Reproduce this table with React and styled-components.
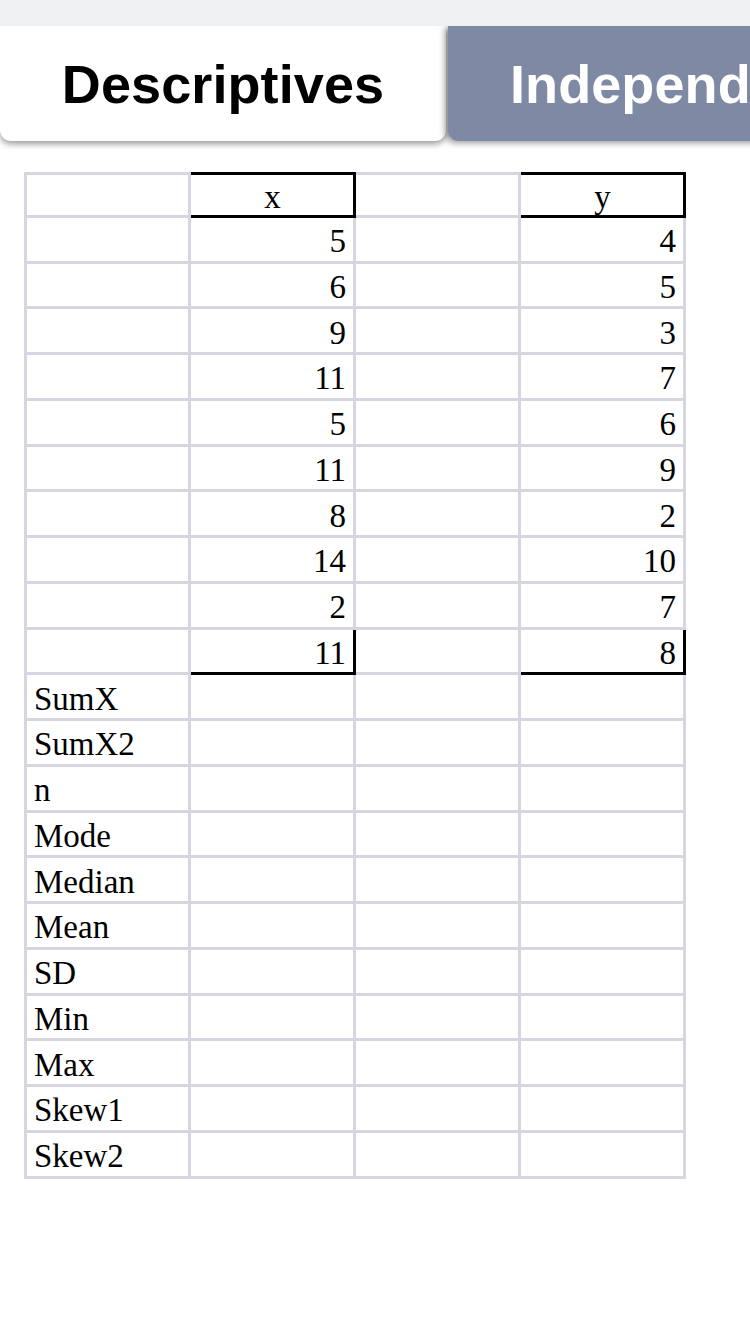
import React from "react";
import styled, { createGlobalStyle } from "styled-components";

const Global = createGlobalStyle`
  html, body { margin: 0; padding: 0; background: #ffffff; }
  body { width: 750px; overflow: hidden; }
`;

const Page = styled.div`
  width: 750px;
  min-height: 1334px;
  background: #ffffff;
`;

const TopStrip = styled.div`
  height: 26px;
  background: #eff0f2;
`;

const TabBar = styled.nav`
  display: flex;
  gap: 2px;
  overflow: hidden;
  padding-bottom: 8px;
`;

const Tab = styled.div`
  flex: 0 0 446px;
  height: 115px;
  display: flex;
  align-items: center;
  justify-content: center;
  white-space: nowrap;
  border-radius: 0 0 11px 11px;
  background: ${(p) => (p.$active ? "#ffffff" : "#7e89a4")};
  color: ${(p) => (p.$active ? "#000000" : "#ffffff")};
  box-shadow: ${(p) =>
    p.$active
      ? "0 3px 6px rgba(0,0,0,0.4)"
      : "-3px 2px 6px rgba(0,0,0,0.4)"};
  font-family: "Liberation Sans", Arial, sans-serif;
  font-weight: 700;
  font-size: 54px;
  letter-spacing: 0.1px;
`;

const Sheet = styled.div`
  margin: 23px 0 0 24px;
  width: 662px;
  display: grid;
  grid-template-columns: 167px 165px 165px 165px;
  grid-auto-rows: 45.75px;
  font-family: "Liberation Serif", "Times New Roman", serif;
  font-size: 33px;
  color: #000;
`;

const GRAY = "#d6d5e0";
const BLACK = "#000000";

const Cell = styled.div`
  box-sizing: border-box;
  display: flex;
  align-items: center;
  justify-content: ${(p) =>
    p.$align === "right" ? "flex-end" : p.$align === "center" ? "center" : "flex-start"};
  padding: 5px ${(p) => (p.$align === "right" ? "7px" : "6px")} 0 7px;
  white-space: nowrap;
  line-height: 1;
  border-right: 3px solid ${(p) => (p.$boxRight ? BLACK : GRAY)};
  border-bottom: 3px solid ${(p) => (p.$boxBottom ? BLACK : GRAY)};
  border-top: ${(p) =>
    p.$first ? `3px solid ${p.$boxTop ? BLACK : GRAY}` : "none"};
  border-left: ${(p) => (p.$leftEdge ? `3px solid ${GRAY}` : "none")};
`;

const xs = [5, 6, 9, 11, 5, 11, 8, 14, 2, 11];
const ys = [4, 5, 3, 7, 6, 9, 2, 10, 7, 8];
const stats = [
  "SumX",
  "SumX2",
  "n",
  "Mode",
  "Median",
  "Mean",
  "SD",
  "Min",
  "Max",
  "Skew1",
  "Skew2",
];

export default function App() {
  const last = xs.length - 1;
  return (
    <Page>
      <Global />
      <TopStrip />
      <TabBar>
        <Tab $active>Descriptives</Tab>
        <Tab>Independent</Tab>
      </TabBar>
      <Sheet>
        <Cell $first $leftEdge />
        <Cell $first $boxTop $boxRight $boxBottom $align="center">
          x
        </Cell>
        <Cell $first />
        <Cell $first $boxTop $boxRight $boxBottom $align="center">
          y
        </Cell>
        {xs.map((x, i) => (
          <React.Fragment key={"d" + i}>
            <Cell $leftEdge />
            <Cell $align="right" $boxRight={i === last} $boxBottom={i === last}>
              {x}
            </Cell>
            <Cell />
            <Cell $align="right" $boxRight={i === last} $boxBottom={i === last}>
              {ys[i]}
            </Cell>
          </React.Fragment>
        ))}
        {stats.map((s) => (
          <React.Fragment key={s}>
            <Cell $leftEdge>{s}</Cell>
            <Cell />
            <Cell />
            <Cell />
          </React.Fragment>
        ))}
      </Sheet>
    </Page>
  );
}
